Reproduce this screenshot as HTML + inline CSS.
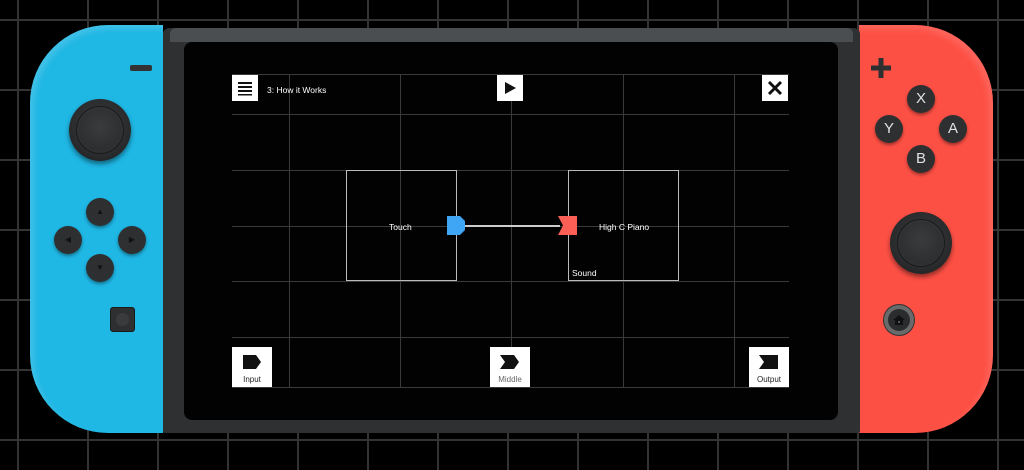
<!DOCTYPE html>
<html><head><meta charset="utf-8"><style>
*{margin:0;padding:0;box-sizing:border-box}
body{width:1024px;height:470px;background:#000;position:relative;overflow:hidden;font-family:"Liberation Sans",sans-serif}
.a{position:absolute}
.bg{left:0;top:0;width:1024px;height:470px;
background-image:linear-gradient(to right,#333 2px,transparent 2px),linear-gradient(to bottom,#333 2px,transparent 2px);
background-size:70px 70px;background-position:17px 19px}
.jl{left:30px;top:25px;width:133px;height:408px;background:#1fb7e4;border-radius:78px 0 0 78px;box-shadow:inset 4px 4px 6px rgba(255,255,255,.15)}
.jr{left:859px;top:25px;width:134px;height:408px;background:#fd5045;border-radius:0 78px 78px 0;box-shadow:inset -4px 4px 6px rgba(255,255,255,.12)}
.body{left:163px;top:28px;width:697px;height:405px;background:#2e3032;border-radius:6px 6px 2px 2px}
.topstrip{left:170px;top:28px;width:683px;height:14px;background:#4b4e50;border-radius:6px 6px 0 0}
.scr{left:184px;top:42px;width:654px;height:378px;background:#020202;border-radius:8px}
.gl{background:#3a3a3a}
.btn{background:#fff}
.stick{border-radius:50%;background:radial-gradient(circle at 50% 45%,#3a3b3d 0,#2b2c2e 60%,#1a1a1b 100%);box-shadow:0 3px 5px rgba(0,0,0,.45)}
.stick::after{content:"";position:absolute;left:7px;top:7px;right:7px;bottom:7px;border-radius:50%;border:1px solid #1a1a1a;box-shadow:inset 0 0 4px rgba(255,255,255,.05)}
.b{width:28px;height:28px;border-radius:50%;background:#2e2f31;box-shadow:0 2px 3px rgba(0,0,0,.4);color:#e0e0e0;font-size:15px;text-align:center;line-height:28px}
.d{color:#111;font-size:8px}
.tx{color:#fff;font-size:8.5px;font-weight:500}
.lbl{color:#222;font-size:8px;position:absolute;bottom:3px;width:100%;text-align:center}
</style></head><body>
<div class="a bg"></div>
<div class="a jl"></div>
<div class="a jr"></div>
<div class="a body"></div>
<div class="a topstrip"></div>
<div class="a scr"></div>

<div class="a gl" style="left:232px;top:74px;width:557px;height:1px"></div>
<div class="a gl" style="left:232px;top:114px;width:557px;height:1px"></div>
<div class="a gl" style="left:232px;top:170px;width:557px;height:1px"></div>
<div class="a gl" style="left:232px;top:226px;width:557px;height:1px"></div>
<div class="a gl" style="left:232px;top:281px;width:557px;height:1px"></div>
<div class="a gl" style="left:232px;top:337px;width:557px;height:1px"></div>
<div class="a gl" style="left:232px;top:387px;width:557px;height:1px"></div>
<div class="a gl" style="left:289px;top:74px;width:1px;height:313px"></div>
<div class="a gl" style="left:400px;top:74px;width:1px;height:313px"></div>
<div class="a gl" style="left:511px;top:74px;width:1px;height:313px"></div>
<div class="a gl" style="left:623px;top:74px;width:1px;height:313px"></div>
<div class="a gl" style="left:734px;top:74px;width:1px;height:313px"></div>

<div class="a btn" style="left:232px;top:75px;width:26px;height:26px">
<svg width="26" height="26"><g fill="#111"><rect x="6" y="7" width="14" height="2"/><rect x="6" y="11" width="14" height="2"/><rect x="6" y="15" width="14" height="2"/><rect x="6" y="19" width="14" height="1.5"/></g></svg></div>
<div class="a tx" style="left:267px;top:85px">3: How it Works</div>
<div class="a btn" style="left:497px;top:75px;width:26px;height:26px">
<svg width="26" height="26"><path d="M8 7 L19 13 L8 19Z" fill="#111"/></svg></div>
<div class="a btn" style="left:762px;top:75px;width:26px;height:26px">
<svg width="26" height="26"><path d="M7 7 L19 19 M19 7 L7 19" stroke="#111" stroke-width="3"/></svg></div>

<div class="a" style="left:346px;top:170px;width:111px;height:111px;border:1.5px solid #bbb"></div>
<div class="a" style="left:568px;top:170px;width:111px;height:111px;border:1.5px solid #bbb"></div>
<div class="a" style="left:465px;top:225px;width:95px;height:1.5px;background:#ccc"></div>
<div class="a tx" style="left:389px;top:222px">Touch</div>
<div class="a tx" style="left:599px;top:222px">High C Piano</div>
<div class="a tx" style="left:572px;top:268px">Sound</div>
<svg class="a" style="left:446px;top:215px" width="20" height="21"><path d="M1 1 H14 L19 6 V15 L14 20 H1Z" fill="#3ea6f5"/></svg>
<svg class="a" style="left:558px;top:215px" width="20" height="21"><path d="M0 1 H19 V20 H0 L5 10.5Z" fill="#fb5f55"/></svg>

<div class="a btn" style="left:232px;top:347px;width:40px;height:40px">
<svg class="a" style="left:10px;top:7px" width="20" height="16"><path d="M1 1 H14 L19 8 L14 15 H1Z" fill="#111"/></svg>
<div class="lbl">Input</div></div>
<div class="a btn" style="left:490px;top:347px;width:40px;height:40px">
<svg class="a" style="left:10px;top:7px" width="20" height="16"><path d="M0 1 H14 L19 8 L14 15 H0 L5 8Z" fill="#111"/></svg>
<div class="lbl" style="color:#666">Middle</div></div>
<div class="a btn" style="left:749px;top:347px;width:40px;height:40px">
<svg class="a" style="left:10px;top:7px" width="20" height="16"><path d="M0 1 H19 V15 H0 L5 8Z" fill="#111"/></svg>
<div class="lbl">Output</div></div>

<div class="a" style="left:130px;top:65px;width:22px;height:6px;background:#333;border-radius:2px"></div>
<div class="a stick" style="left:69px;top:99px;width:62px;height:62px"></div>
<div class="a b d" style="left:86px;top:198px">▲</div>
<div class="a b d" style="left:54px;top:226px">◀</div>
<div class="a b d" style="left:118px;top:226px">▶</div>
<div class="a b d" style="left:86px;top:254px">▼</div>
<div class="a" style="left:110px;top:307px;width:25px;height:25px;background:#2e2f31;border-radius:3px;border:1px solid #1a1a1a"><div class="a" style="left:5px;top:5px;width:13px;height:13px;border-radius:50%;background:#3a3b3d"></div></div>

<svg class="a" style="left:869px;top:56px" width="24" height="24"><path d="M12 2 V22 M2 12 H22" stroke="#2e2f31" stroke-width="5"/></svg>
<div class="a b" style="left:907px;top:85px">X</div>
<div class="a b" style="left:875px;top:115px">Y</div>
<div class="a b" style="left:939px;top:115px">A</div>
<div class="a b" style="left:907px;top:145px">B</div>
<div class="a stick" style="left:890px;top:212px;width:62px;height:62px"></div>
<div class="a" style="left:883px;top:304px;width:32px;height:32px;border-radius:50%;background:#6a6a6a;border:1px solid #333"><div class="a" style="left:4px;top:4px;width:22px;height:22px;border-radius:50%;background:#2b2c2e"></div>
<svg class="a" style="left:8px;top:8px" width="14" height="14"><path d="M7 2 L13 7 H11 V12 H3 V7 H1Z" fill="#111"/><rect x="6" y="8" width="2" height="2" fill="#555"/></svg></div>
</body></html>
